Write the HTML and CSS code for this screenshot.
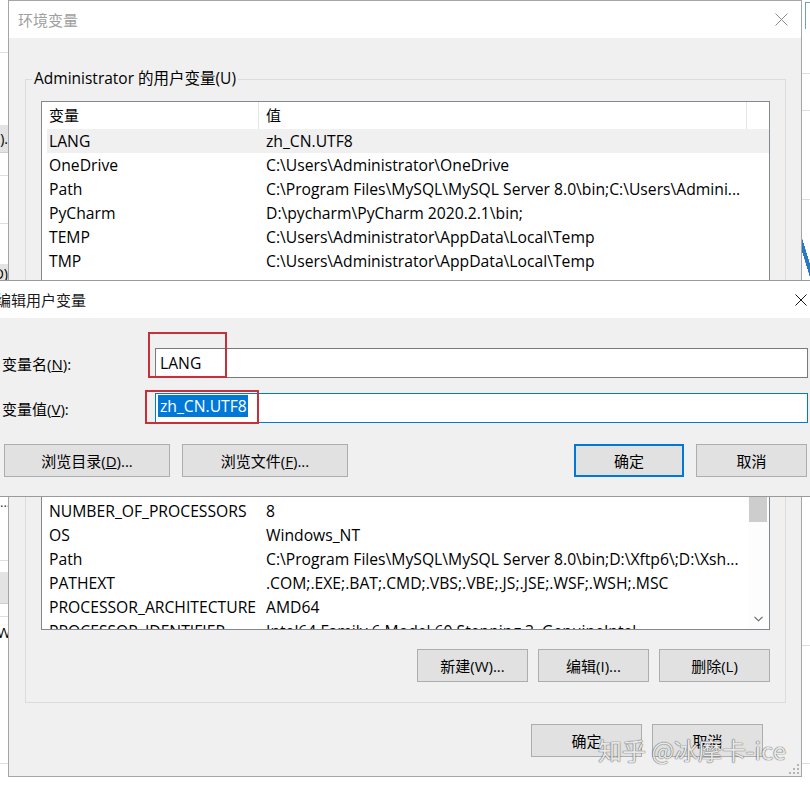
FILE: index.html
```html
<!DOCTYPE html>
<html lang="zh-CN">
<head>
<meta charset="utf-8">
<title>环境变量</title>
<link rel="stylesheet" href="styles.css">
</head>
<body>
<div class="desktop">

  <div class="bg-app bg-left">
    <div class="bg-blank h52"></div>
    <div class="bg-line"></div>
    <div class="bg-blank h72"></div>
    <div class="bg-cell h28"><span>(E).</span></div>
    <div class="bg-blank h22"></div>
    <div class="bg-line"></div>
    <div class="bg-blank h47"></div>
    <div class="bg-line"></div>
    <div class="bg-blank h40"></div>
    <div class="bg-cell h20"><span>(O)</span></div>
    <div class="bg-blank h214"></div>
    <div class="bg-dots">...</div>
    <div class="bg-blank h50"></div>
    <div class="bg-line"></div>
    <div class="bg-blank h11"></div>
    <div class="bg-cell h32"></div>
    <div class="bg-blank h12"></div>
    <div class="bg-line"></div>
    <div class="bg-text">Wi</div>
    <div class="bg-blank h116"></div>
    <div class="bg-line"></div>
  </div>

  <div class="bg-app bg-right">
    <div class="bg-tab"></div>
    <div class="bg-blank h44"></div>
    <div class="bg-line"></div>
    <div class="bg-blank h36"></div>
    <div class="bg-line"></div>
    <div class="bg-blank h88"></div>
    <div class="bg-line"></div>
    <div class="bg-blank h38"></div>
    <div class="bg-slash"></div>
    <div class="bg-blank h367"></div>
    <div class="bg-line"></div>
    <div class="bg-blank h117"></div>
    <div class="bg-line"></div>
  </div>

  <section class="win main-win">
    <header class="titlebar">
      <span class="title inactive">环境变量</span>
      <span class="close close-main">
        <svg width="13" height="13" viewBox="0 0 13 13"><path d="M0.5 0.5L12.5 12.5M12.5 0.5L0.5 12.5" stroke="#8a8a8a" stroke-width="1" fill="none"/></svg>
      </span>
    </header>
    <div class="main-body">
      <div class="group g-user">
        <div class="legend">Administrator 的用户变量(U)</div>
        <div class="listview lv-user">
          <div class="lv-rows">
            <div class="lv-head"><span>变量</span><span>值</span></div>
            <div class="lv-row sel"><span>LANG</span><span>zh_CN.UTF8</span></div>
            <div class="lv-row"><span>OneDrive</span><span>C:\Users\Administrator\OneDrive</span></div>
            <div class="lv-row"><span>Path</span><span>C:\Program Files\MySQL\MySQL Server 8.0\bin;C:\Users\Admini...</span></div>
            <div class="lv-row"><span>PyCharm</span><span>D:\pycharm\PyCharm 2020.2.1\bin;</span></div>
            <div class="lv-row"><span>TEMP</span><span>C:\Users\Administrator\AppData\Local\Temp</span></div>
            <div class="lv-row"><span>TMP</span><span>C:\Users\Administrator\AppData\Local\Temp</span></div>
          </div>
        </div>
        <div class="btn-row">
          <button class="btn">新建(N)...</button>
          <button class="btn">编辑(E)...</button>
          <button class="btn">删除(D)</button>
        </div>
      </div>

      <div class="group g-sys">
        <div class="legend">系统变量(S)</div>
        <div class="listview lv-sys">
          <div class="lv-rows">
            <div class="lv-head"><span>变量</span><span>值</span></div>
            <div class="lv-row"><span>ComSpec</span><span>C:\Windows\system32\cmd.exe</span></div>
            <div class="lv-row"><span>DriverData</span><span>C:\Windows\System32\Drivers\DriverData</span></div>
            <div class="lv-row"><span>JAVA_HOME</span><span>C:\Java\jdk1.8.0</span></div>
            <div class="lv-row"><span>NUMBER_OF_PROCESSORS</span><span>8</span></div>
            <div class="lv-row"><span>OS</span><span>Windows_NT</span></div>
            <div class="lv-row"><span>Path</span><span>C:\Program Files\MySQL\MySQL Server 8.0\bin;D:\Xftp6\;D:\Xsh...</span></div>
            <div class="lv-row"><span>PATHEXT</span><span>.COM;.EXE;.BAT;.CMD;.VBS;.VBE;.JS;.JSE;.WSF;.WSH;.MSC</span></div>
            <div class="lv-row"><span>PROCESSOR_ARCHITECTURE</span><span>AMD64</span></div>
            <div class="lv-row"><span>PROCESSOR_IDENTIFIER</span><span>Intel64 Family 6 Model 60 Stepping 3, GenuineIntel</span></div>
          </div>
          <div class="scrollbar">
            <div class="sb-arrow"></div>
            <div class="sb-thumb"></div>
            <div class="sb-track"></div>
            <div class="sb-arrow">
              <svg width="9" height="6" viewBox="0 0 9 6"><path d="M0.5 0.8L4.5 4.8L8.5 0.8" stroke="#606060" stroke-width="1.1" fill="none"/></svg>
            </div>
          </div>
        </div>
        <div class="btn-row">
          <button class="btn">新建(W)...</button>
          <button class="btn">编辑(I)...</button>
          <button class="btn">删除(L)</button>
        </div>
      </div>

      <div class="dlg-buttons">
        <button class="btn">确定</button>
        <button class="btn">取消</button>
      </div>
    </div>
    <svg class="grip" width="12" height="12" viewBox="0 0 12 12">
      <rect x="9" y="1" width="2" height="2" fill="#b5b5b5"/>
      <rect x="5" y="5" width="2" height="2" fill="#b5b5b5"/>
      <rect x="9" y="5" width="2" height="2" fill="#b5b5b5"/>
      <rect x="1" y="9" width="2" height="2" fill="#b5b5b5"/>
      <rect x="5" y="9" width="2" height="2" fill="#b5b5b5"/>
      <rect x="9" y="9" width="2" height="2" fill="#b5b5b5"/>
    </svg>
  </section>

  <section class="win edit-dlg">
    <header class="titlebar">
      <span class="title dlg-title">编辑用户变量</span>
      <span class="close close-dlg">
        <svg width="12" height="12" viewBox="0 0 12 12"><path d="M0.5 0.5L11.5 11.5M11.5 0.5L0.5 11.5" stroke="#1a1a1a" stroke-width="1" fill="none"/></svg>
      </span>
    </header>
    <div class="dlg-body">
      <div class="form">
        <label class="lbl">变量名(<u>N</u>):</label>
        <div class="field">LANG</div>
        <label class="lbl">变量值(<u>V</u>):</label>
        <div class="field focus"><span class="sel-text">zh_CN.UTF8</span></div>
      </div>
      <div class="dlg-btns">
        <button class="btn wide">浏览目录(<u>D</u>)...</button>
        <button class="btn wide">浏览文件(<u>F</u>)...</button>
        <span class="spacer"></span>
        <button class="btn default">确定</button>
        <button class="btn">取消</button>
      </div>
    </div>
  </section>

  <div class="mark mark-name"></div>
  <div class="mark mark-value"></div>
  <div class="watermark">知乎 @冰摩卡-ice</div>
</div>
</body>
</html>
```

FILE: styles.css
```css
* { box-sizing: border-box; }
html, body { margin: 0; padding: 0; }
body {
  width: 810px;
  height: 785px;
  overflow: hidden;
  background: #fff;
  font-family: "Open Sans", "Noto Sans CJK SC", sans-serif;
  font-size: 15px;
  color: #000;
}
.desktop { position: relative; width: 810px; height: 785px; overflow: hidden; background: #fff; }

/* background application strips */
.bg-app { position: absolute; top: 0; height: 785px; display: flex; flex-direction: column; overflow: hidden; }
.bg-left { left: 0; width: 8px; }
.bg-right { left: 802px; width: 8px; }
.bg-blank { flex: none; }
.h11 { height: 11px; } .h12 { height: 12px; } .h20 { height: 20px; } .h22 { height: 22px; }
.h28 { height: 28px; } .h32 { height: 32px; } .h36 { height: 36px; } .h38 { height: 38px; }
.h40 { height: 40px; } .h44 { height: 44px; } .h47 { height: 47px; } .h50 { height: 50px; }
.h52 { height: 52px; } .h72 { height: 72px; } .h88 { height: 88px; } .h116 { height: 116px; }
.h117 { height: 117px; } .h214 { height: 214px; } .h367 { height: 367px; }
.bg-line { height: 1px; background: #dedede; flex: none; }
.bg-cell { flex: none; background: #e3e3e3; border-bottom: 1px solid #cfcfcf; display: flex; align-items: center; justify-content: flex-end; overflow: hidden; font-size: 14px; white-space: nowrap; }
.bg-cell.h20 { height: 20px; }
.bg-dots { height: 12px; line-height: 8px; font-size: 13px; color: #333; white-space: nowrap; flex: none; }
.bg-text { height: 30px; line-height: 30px; font-size: 15px; white-space: nowrap; margin-left: -3px; flex: none; }
.bg-tab { height: 27px; border-left: 1px solid #6a9fc8; border-top: 1px solid #6a9fc8; margin-top: 2px; margin-left: 3px; flex: none; }
.bg-slash { height: 40px; flex: none; background: linear-gradient(73deg, transparent 40%, #2a78c0 41%, #2a78c0 60%, transparent 61%); }

/* windows */
.win { position: absolute; display: flex; flex-direction: column; border: 1px solid #a5a5a5; background: #f0f0f0; }
.main-win { left: 8px; top: 0; width: 794px; height: 777px; }
.edit-dlg { left: -13px; top: 280px; width: 844px; height: 217px; border-color: #9a9a9a; }

.titlebar { flex: none; height: 37px; background: #fff; display: flex; align-items: center; }
.title { flex: 1; line-height: 37px; white-space: nowrap; font-family: "Noto Sans CJK SC", sans-serif; }
.title.inactive { padding-left: 9px; color: #a0a0a0; }
.dlg-title { padding-left: 8px; color: #1a1a1a; }
.close { display: flex; align-items: center; justify-content: center; height: 37px; }
.close-main { width: 40px; }
.close-dlg { width: 58px; }
.close svg { display: block; }

/* main window body */
.main-body { flex: 1; display: flex; flex-direction: column; padding: 41px 15px 19px 16px; }
.group { border: 1px solid #dcdcdc; padding: 0 15px 20px; flex: none; }
.g-sys { margin-top: 18px; }
.legend {
  margin: -12px 0 0 -9px;
  padding: 0 2px;
  width: max-content;
  height: 20px;
  line-height: 20px;
  font-size: 15.5px;
  background: #f0f0f0;
  white-space: nowrap;
}
.listview { margin-top: 13px; border: 1px solid #828790; background: #fff; overflow: hidden; display: flex; }
.lv-user { height: 185px; }
.lv-sys { height: 231px; }
.lv-rows { flex: 1; min-width: 0; padding-left: 5px; overflow: hidden; font-size: 15.7px; }
.lv-head, .lv-row { display: grid; grid-template-columns: 212px 488px; white-space: nowrap; }
.lv-head { height: 27px; line-height: 27px; font-size: 15px; }
.lv-head span { border-right: 1px solid #e5e5e5; }
.lv-row { height: 24px; line-height: 24px; }
.lv-row.sel { background: #f0f0f0; }
.lv-head span, .lv-row span { overflow: hidden; }
.lv-head span:first-child, .lv-row span:first-child { padding-left: 2px; }
.lv-head span:last-child, .lv-row span:last-child { padding-left: 7px; }

.scrollbar { width: 21px; flex: none; display: flex; flex-direction: column; background: #fdfdfd; }
.sb-arrow { height: 21px; flex: none; display: flex; align-items: center; justify-content: center; }
.sb-thumb { height: 101px; flex: none; margin: 0 2px 0 1px; background: #cdcdcd; }
.sb-track { flex: 1; }

.btn {
  height: 33px;
  width: 111px;
  padding: 0;
  margin: 0;
  background: #e1e1e1;
  border: 1px solid #adadad;
  font-family: "Open Sans", "Noto Sans CJK SC", sans-serif;
  font-size: 15px;
  color: #000;
  white-space: nowrap;
}
.btn-row { margin-top: 19px; display: flex; justify-content: flex-end; gap: 10px; }
.dlg-buttons { margin-top: 21px; display: flex; justify-content: flex-end; gap: 10px; padding-right: 23px; }

.grip { position: absolute; right: 1px; bottom: 1px; }

/* edit dialog */
.dlg-body { flex: 1; padding: 30px 22px 19px 15px; }
.form { display: grid; grid-template-columns: 152px 1fr; row-gap: 15px; align-items: center; }
.lbl { white-space: nowrap; margin-left: -1px; }
.field {
  height: 30px;
  border: 1px solid #7a7a7a;
  background: #fff;
  padding-left: 4px;
  display: flex;
  align-items: center;
  font-size: 15.7px;
}
.field.focus { border-color: #0078d7; padding-left: 2px; padding-top: 1px; align-items: flex-start; }
.sel-text { background: #0078d7; color: #fff; line-height: 22px; padding: 0 1px 0 2px; }
.dlg-btns { margin-top: 21px; display: flex; gap: 12px; padding: 0 1px; }
.btn.wide { width: 166px; }
.btn.default { width: 110px; border: 2px solid #0078d7; }
.spacer { flex: 1; }

/* annotations */
.mark { position: absolute; border: 2px solid #c73039; }
.mark-name { left: 148px; top: 332px; width: 79px; height: 46px; }
.mark-value { left: 145px; top: 390px; width: 114px; height: 34px; }

.watermark {
  position: absolute;
  left: 598px;
  top: 734px;
  font-family: "Noto Sans CJK SC", sans-serif;
  font-size: 24px;
  line-height: 32px;
  white-space: nowrap;
  color: rgba(255, 255, 255, 0.9);
  text-shadow: 0 0 1px rgba(60, 60, 60, 0.85), 0 0 1px rgba(60, 60, 60, 0.85);
}
```
